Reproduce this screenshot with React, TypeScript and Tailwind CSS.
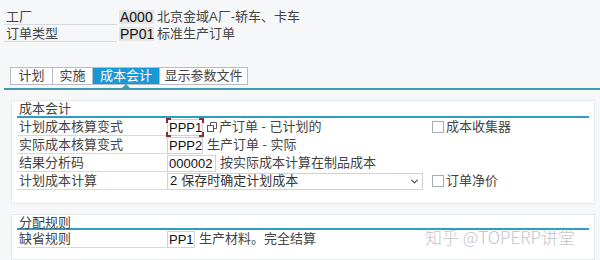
import { ChevronDown } from "lucide-react";

const cjk = "font-['Liberation_Sans','Noto_Sans_CJK_SC',sans-serif]";

function HeadRow({ label, code, text }: { label: string; code: string; text: string }) {
  return (
    <div className="flex h-[16px] items-center">
      <div className="h-full w-[113px] border-b border-[#d6dade] pl-[2px] leading-[15px]">{label}</div>
      <div className="ml-[2px] h-[14px] w-[35px] bg-[#e4e4e4] px-[1px] text-[14px] leading-[14px] text-[#111]">{code}</div>
      <div className="ml-[3px]">{text}</div>
    </div>
  );
}

function Row({ label, children }: { label: string; children: React.ReactNode }) {
  return (
    <div className="flex h-[18px] items-center">
      <div className="h-full w-[150px] border-b border-[#d6dade] pl-[2px] leading-[18px]">{label}</div>
      <div className="flex h-full flex-1 items-center">{children}</div>
    </div>
  );
}

function Field({ value, w }: { value: string; w: string }) {
  return (
    <div className={`${w} h-[17px] border border-[#cfd3d7] bg-white px-[1px] text-[13px] leading-[15px] text-[#111]`}>{value}</div>
  );
}

function Check({ label }: { label: string }) {
  return (
    <div className="flex items-center">
      <div className="h-[12px] w-[12px] border border-[#a9adb1] bg-white" />
      <span className="ml-[2px]">{label}</span>
    </div>
  );
}

const tabs = [
  { t: "计划", w: "w-[43px]" },
  { t: "实施", w: "w-[40px]" },
  { t: "成本会计", w: "w-[67px]" },
  { t: "显示参数文件", w: "w-[88px]" },
];

export default function App() {
  return (
    <div className={`relative h-[260px] w-[600px] overflow-hidden bg-[#f6f7f9] text-[13px] text-[#444] ${cjk}`}>
      <div className="px-[4px] pt-[9px]">
        <HeadRow label="工厂" code="A000" text="北京金域A厂-轿车、卡车" />
        <div className="h-[1px]" />
        <HeadRow label="订单类型" code="PP01" text="标准生产订单" />
      </div>

      <div className="mt-[25px] flex pl-[10px]">
        {tabs.map(({ t, w }) => (
          <div
            key={t}
            className={`${w} h-[18px] border border-l-0 border-[#b8bcc0] text-center leading-[16px] first:border-l ${
              t === "成本会计" ? "relative border-[#1a98d5] bg-[#1a98d5] text-white" : "bg-white"
            }`}
          >
            {t}
            {t === "成本会计" && (
              <div className="absolute -bottom-[4px] left-1/2 h-0 w-0 -translate-x-1/2 border-x-[4px] border-b-[4px] border-x-transparent border-b-[#3e9bb1]" />
            )}
          </div>
        ))}
      </div>
      <div className="ml-[4px] mt-[3px] h-[2px] bg-[#3e9bb1]" />

      <div className="ml-[11px] mr-[5px] mt-[10px] h-[104px] border border-[#e6e9ec] bg-white px-[5px]">
        <div className="h-[17px] border-b-2 border-[#2c9ec6] pl-[2px] leading-[16px]">成本会计</div>
        <Row label="计划成本核算变式">
          <div className="flex w-[265px] items-center">
            <div className="relative h-[17px] w-[36px] border border-[#cfd3d7] bg-white px-[1px] text-[13px] leading-[15px] text-[#111]">
              PPP1
              <span className="absolute -left-[2px] -top-[2px] h-[5px] w-[5px] border-l-2 border-t-2 border-[#8a2b3a]" />
              <span className="absolute -right-[2px] -top-[2px] h-[5px] w-[5px] border-r-2 border-t-2 border-[#8a2b3a]" />
              <span className="absolute -bottom-[2px] -left-[2px] h-[5px] w-[5px] border-b-2 border-l-2 border-[#8a2b3a]" />
              <span className="absolute -bottom-[2px] -right-[2px] h-[5px] w-[5px] border-b-2 border-r-2 border-[#8a2b3a]" />
            </div>
            <svg className="ml-[3px]" width="12" height="12" viewBox="0 0 12 12" fill="none" stroke="#555" strokeWidth="1">
              <rect x="1.5" y="4.5" width="6" height="6" />
              <path d="M4.5 4.5V1.5h6v6h-3" />
            </svg>
            <span className="ml-[1px]">产订单 - 已计划的</span>
          </div>
          <Check label="成本收集器" />
        </Row>
        <Row label="实际成本核算变式">
          <Field value="PPP2" w="w-[36px]" />
          <span className="ml-[4px]">生产订单 - 实际</span>
        </Row>
        <Row label="结果分析码">
          <Field value="000002" w="w-[49px]" />
          <span className="ml-[4px]">按实际成本计算在制品成本</span>
        </Row>
        <Row label="计划成本计算">
          <div className="flex h-[17px] w-[256px] items-center border border-[#cfd3d7] bg-white px-[2px] text-[#333]">
            <span className="text-[13px] text-[#111]">2</span>
            <span className="ml-[4px]">保存时确定计划成本</span>
            <ChevronDown className="ml-auto" size={11} strokeWidth={3} color="#555" />
          </div>
          <div className="ml-[9px]">
            <Check label="订单净价" />
          </div>
        </Row>
      </div>

      <div className="ml-[11px] mr-[5px] mt-[10px] h-[46px] border border-[#e6e9ec] bg-white px-[5px]">
        <div className="h-[15px] border-b-2 border-[#2c9ec6] pl-[2px] leading-[16px]">分配规则</div>
        <Row label="缺省规则">
          <Field value="PP1" w="w-[28px]" />
          <span className="ml-[4px]">生产材料。完全结算</span>
        </Row>
      </div>

      <div className="absolute left-[425px] top-[227px] font-['Noto_Sans_CJK_SC',sans-serif] text-[17px] font-light leading-[20px] text-[#c4c6c8]">
        知乎 @TOPERP讲堂
      </div>
    </div>
  );
}
